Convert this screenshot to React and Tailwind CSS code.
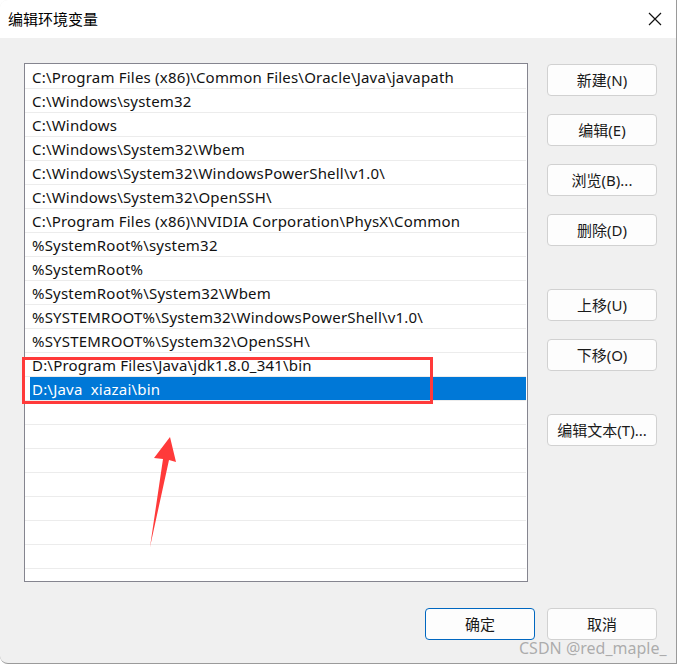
import React from 'react';

const paths = [
  'C:\\Program Files (x86)\\Common Files\\Oracle\\Java\\javapath',
  'C:\\Windows\\system32',
  'C:\\Windows',
  'C:\\Windows\\System32\\Wbem',
  'C:\\Windows\\System32\\WindowsPowerShell\\v1.0\\',
  'C:\\Windows\\System32\\OpenSSH\\',
  'C:\\Program Files (x86)\\NVIDIA Corporation\\PhysX\\Common',
  '%SystemRoot%\\system32',
  '%SystemRoot%',
  '%SystemRoot%\\System32\\Wbem',
  '%SYSTEMROOT%\\System32\\WindowsPowerShell\\v1.0\\',
  '%SYSTEMROOT%\\System32\\OpenSSH\\',
  'D:\\Program Files\\Java\\jdk1.8.0_341\\bin',
  'D:\\Java  xiazai\\bin',
];

const font = { fontFamily: '"Noto Sans", "Noto Sans CJK SC", sans-serif' };

function Btn({ children, primary }) {
  return (
    <button
      className={
        primary
          ? 'w-[110px] h-[32px] bg-[#fdfdfd] border border-[#0067c0] rounded-[4px] text-[15px] text-[#1a1a1a]'
          : 'w-[110px] h-[32px] bg-[#fdfdfd] border border-[#d1d1d1] rounded-[4px] text-[15px] text-[#1a1a1a]'
      }
    >
      {children}
    </button>
  );
}

export default function App() {
  const rows = [...paths, ...Array(7).fill('')];
  return (
    <div
      className="relative w-[677px] h-[664px] bg-[#f0f0f0] border-r border-b border-[#9a9a9a] rounded-bl-[8px] rounded-tl-[8px] overflow-hidden"
      style={font}
    >
      <div className="h-[38px] bg-white flex items-center justify-between pl-[8px] pr-[14px]">
        <span className="text-[15px] text-black">编辑环境变量</span>
        <svg width="14" height="14" viewBox="0 0 14 14">
          <path d="M1 1L13 13M13 1L1 13" stroke="#111" strokeWidth="1.2" />
        </svg>
      </div>

      <div className="flex pl-[24px] pt-[25px]">
        <div className="w-[504px] h-[519px] bg-white border border-[#85858f] pt-[1px] pr-[1px] overflow-hidden">
          {rows.map((p, i) => (
            <div key={i} className="h-[24px] border-b border-[#ececec] pl-[5px] flex">
              <div
                className={
                  i === 13
                    ? 'flex-1 flex items-center pl-[2px] pt-[1px] bg-[#0078d7] text-white text-[15px] tracking-[0.2px] whitespace-pre'
                    : 'flex-1 flex items-center pl-[2px] pt-[1px] text-[15px] tracking-[0.2px] text-[#111] whitespace-pre'
                }
              >
                {p}
              </div>
            </div>
          ))}
        </div>

        <div className="flex flex-col ml-[19px] pt-[1px]">
          <Btn>新建(N)</Btn>
          <div className="h-[18px]" />
          <Btn>编辑(E)</Btn>
          <div className="h-[18px]" />
          <Btn>浏览(B)...</Btn>
          <div className="h-[18px]" />
          <Btn>删除(D)</Btn>
          <div className="h-[43px]" />
          <Btn>上移(U)</Btn>
          <div className="h-[18px]" />
          <Btn>下移(O)</Btn>
          <div className="h-[43px]" />
          <Btn>编辑文本(T)...</Btn>
        </div>
      </div>

      <div className="flex justify-end gap-[12px] pr-[19px] pt-[26px]">
        <Btn primary>确定</Btn>
        <Btn>取消</Btn>
      </div>

      <div className="absolute left-[22px] top-[357px] w-[411px] h-[47px] border-[3px] border-[#ff3a3a]" />

      <svg className="absolute left-[140px] top-[430px]" width="50" height="125" viewBox="0 0 50 125">
        <path d="M30 7 L36 32 L29 30 L10 117 L23 29 L14 28 Z" fill="#ff3a3a" />
      </svg>

      <div className="absolute left-[519px] top-[636px] text-[16px] text-[#9a9a9a]/80 whitespace-nowrap">
        CSDN @red_maple_
      </div>
    </div>
  );
}
